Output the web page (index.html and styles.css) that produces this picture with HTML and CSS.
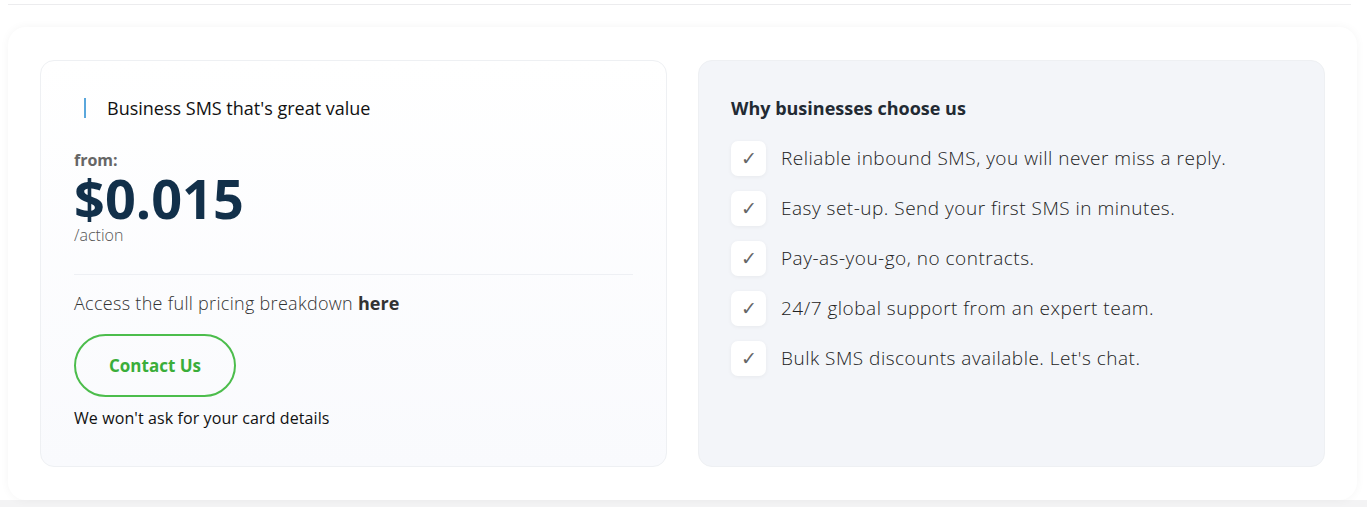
FILE: index.html
```html
<!DOCTYPE html>
<html lang="en">
<head>
<meta charset="utf-8">
<title>Business SMS pricing</title>
<link rel="stylesheet" href="styles.css">
</head>
<body>
<div class="topline"></div>
<section class="outer">
  <div class="card price-card">
    <h2 class="eyebrow">Business SMS that's great value</h2>
    <div class="from">from:</div>
    <div class="price">$0.015</div>
    <div class="unit">/action</div>
    <hr class="divider">
    <p class="access">Access the full pricing breakdown <a href="#" class="here">here</a></p>
    <a href="#" class="btn">Contact Us</a>
    <p class="note">We won't ask for your card details</p>
  </div>
  <div class="card why-card">
    <h3 class="why-title">Why businesses choose us</h3>
    <ul class="list">
      <li><span class="check">✓</span>Reliable inbound SMS, you will never miss a reply.</li>
      <li><span class="check">✓</span>Easy set-up. Send your first SMS in minutes.</li>
      <li><span class="check">✓</span>Pay-as-you-go, no contracts.</li>
      <li><span class="check">✓</span>24/7 global support from an expert team.</li>
      <li><span class="check">✓</span>Bulk SMS discounts available. Let's chat.</li>
    </ul>
  </div>
</section>
</body>
</html>
```

FILE: styles.css
```css
* { box-sizing: border-box; }
html, body { margin: 0; padding: 0; }
body {
  font-family: "Open Sans", "Noto Sans", sans-serif;
  color: #222;
  width: 1367px;
  height: 507px;
  overflow: hidden;
  background: linear-gradient(#fff 0, #fff 500px, #f3f3f4 500px);
}
.topline {
  height: 5px;
  margin: 0 16px 0 8px;
  border-bottom: 1px solid #ececee;
}
.outer {
  margin: 22px 10px 0 8px;
  height: 473px;
  background: #fff;
  border-radius: 18px;
  box-shadow: 0 0 10px rgba(0, 0, 0, 0.045);
  padding: 33px 32px 33px 32px;
  display: grid;
  grid-template-columns: 627px 627px;
  column-gap: 31px;
}
.card {
  border-radius: 14px;
  border: 1px solid #eef0f3;
}
.price-card {
  background: linear-gradient(#ffffff, #f9fafd);
  padding: 37px 33px 0 33px;
  display: flex;
  flex-direction: column;
  align-items: flex-start;
}
.eyebrow {
  margin: 0 0 0 10px;
  padding-left: 21px;
  border-left: 2px solid #5aa7dc;
  font-size: 18px;
  font-weight: 400;
  line-height: 20px;
  color: #111;
}
.from {
  margin-top: 33px;
  font-size: 16px;
  font-weight: 700;
  color: #666;
  line-height: 18px;
}
.price {
  font-size: 54px;
  font-weight: 700;
  color: #12304a;
  line-height: 44px;
  margin-top: 7px;
}
.unit {
  font-size: 16px;
  font-weight: 300;
  color: #555;
  line-height: 18px;
  margin-top: 6px;
}
.divider {
  align-self: stretch;
  border: 0;
  border-top: 1px solid #eef0f4;
  margin: 30px 0 0 0;
}
.access {
  margin: 16px 0 0 0;
  font-size: 18px;
  font-weight: 300;
  letter-spacing: 0.3px;
  color: #333;
  line-height: 24px;
}
.here {
  color: #333;
  font-weight: 700;
  letter-spacing: 0;
  text-decoration: none;
}
.btn {
  margin-top: 19px;
  width: 162px;
  height: 63px;
  border: 2px solid #4cbd4c;
  border-radius: 32px;
  display: flex;
  align-items: center;
  justify-content: center;
  font-size: 17px;
  font-weight: 700;
  color: #3aae3a;
  text-decoration: none;
}
.note {
  margin: 11px 0 0 0;
  font-size: 16px;
  letter-spacing: 0.1px;
  color: #111;
  line-height: 20px;
}
.why-card {
  background: #f3f5f9;
  padding: 35px 33px 0 32px;
}
.why-title {
  margin: 0;
  font-size: 18px;
  font-weight: 700;
  color: #222a33;
  line-height: 24px;
}
.list {
  list-style: none;
  margin: 21px 0 0 0;
  padding: 0;
  display: flex;
  flex-direction: column;
  gap: 15px;
}
.list li {
  display: flex;
  align-items: center;
  gap: 15px;
  font-size: 19px;
  font-weight: 300;
  letter-spacing: 0.5px;
  color: #222;
  line-height: 35px;
}
.check {
  width: 35px;
  height: 35px;
  flex: none;
  background: #fff;
  border-radius: 7px;
  box-shadow: 0 1px 4px rgba(0, 0, 0, 0.05);
  display: flex;
  align-items: center;
  justify-content: center;
  font-family: "DejaVu Sans", sans-serif;
  font-size: 19px;
  letter-spacing: 0;
  color: #666;
}
```
